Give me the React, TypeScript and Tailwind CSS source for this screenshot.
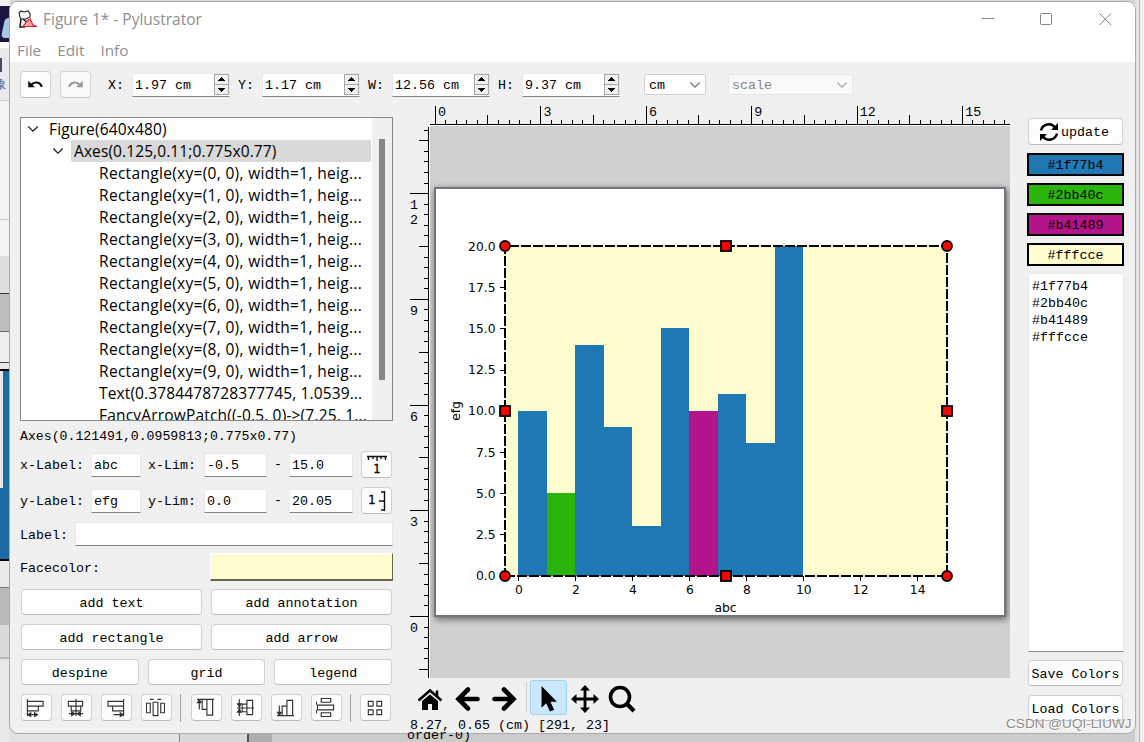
import type { ReactNode } from "react";

/**
 * Main window of the figure editor.
 *
 * Structure:
 * - Title bar and menu
 * - Position / size toolbar
 * - Element tree and property panel
 * - Canvas with rulers and navigation
 * - Color list
 */

const MONO = "font-['Liberation_Mono',monospace] text-[13.33px] leading-4";
const UI = "font-['Open_Sans','Noto_Sans_CJK_SC',sans-serif]";

interface BoxProps {
  className?: string;
  children?: ReactNode;
}

interface Bar {
  x: number;
  w: number;
  y: number;
  fill: string;
}

const positionFields = [
  { label: "X:", value: "1.97 cm" },
  { label: "Y:", value: "1.17 cm" },
  { label: "W:", value: "12.56 cm" },
  { label: "H:", value: "9.37 cm" },
];

const treeChildren = [
  ...[0, 1, 2, 3, 4, 5, 6, 7, 8, 9].map((n) => ({
    label: `Rectangle(xy=(${n}, 0), width=1, heig...`,
    className: "tracking-[0.31px]",
  })),
  { label: "Text(0.3784478728377745, 1.0539...", className: "tracking-[0.13px]" },
  { label: "FancyArrowPatch((-0.5, 0)->(7.25, 1...", className: "tracking-[0.18px]" },
];

const swatches = [
  { color: "#1f77b4", className: "bg-[#1f77b4]" },
  { color: "#2bb40c", className: "bg-[#2bb40c]" },
  { color: "#b41489", className: "bg-[#b41489]" },
  { color: "#fffcce", className: "bg-[#fffcce]" },
];

// Bars in figure pixels
const bars: Bar[] = [
  { x: 84, w: 29, y: 224, fill: "#1f77b4" },
  { x: 113, w: 28, y: 306, fill: "#2bb40c" },
  { x: 141, w: 29, y: 158, fill: "#1f77b4" },
  { x: 170, w: 28, y: 240, fill: "#1f77b4" },
  { x: 198, w: 29, y: 339, fill: "#1f77b4" },
  { x: 227, w: 28, y: 141, fill: "#1f77b4" },
  { x: 255, w: 29, y: 224, fill: "#b41489" },
  { x: 284, w: 28, y: 207, fill: "#1f77b4" },
  { x: 312, w: 29, y: 256, fill: "#1f77b4" },
  { x: 341, w: 28, y: 59, fill: "#1f77b4" },
];

const yTicks = ["20.0", "17.5", "15.0", "12.5", "10.0", "7.5", "5.0", "2.5", "0.0"];
const xTicks = ["0", "2", "4", "6", "8", "10", "12", "14"];

function PushButton({ className = "", children }: BoxProps) {
  return (
    <button
      type="button"
      className={`flex items-center justify-center whitespace-nowrap rounded-[4px] border border-[#d0d0d0] border-b-[#bcbcbc] bg-[#fdfdfd] ${className}`}
    >
      {children}
    </button>
  );
}

function TextButton({ className = "", children }: BoxProps) {
  return <PushButton className={`h-[26px] pt-[4px] ${className}`}>{children}</PushButton>;
}

function Field({ className = "", children }: BoxProps) {
  return (
    <div className={`flex h-6 items-center whitespace-pre border border-[#e9e9e9] border-b-[#868686] bg-white pl-[2px] ${className}`}>
      {children}
    </div>
  );
}

function SpinBox({ value }: { value: string }) {
  return (
    <Field className="w-[98px] justify-between pl-[1px]">
      <span className="pt-[2px]">{value}</span>
      <svg width="15" height="22" viewBox="0 0 15 22" shapeRendering="crispEdges">
        <rect x="0.5" y="0.5" width="14" height="20" fill="#f0f0f0" stroke="#a8a8a8" />
        <path d="M1 10.5h13" stroke="#a8a8a8" />
        <path d="M4 7h7v-1h-1v-1h-1v-1h-1v-1h-1v1h-1v1h-1v1h-1z" fill="#000" />
        <path d="M4 14h7v1h-1v1h-1v1h-1v1h-1v-1h-1v-1h-1v-1h-1z" fill="#000" />
      </svg>
    </Field>
  );
}

function Chevron({ color = "#222" }: { color?: string }) {
  return (
    <svg width="12" height="12" viewBox="0 0 12 12" fill="none" stroke={color} strokeWidth="1.3">
      <path d="M1.3 3.5 6 8.2l4.7-4.7" />
    </svg>
  );
}

function AppIcon() {
  return (
    <svg width="20" height="18" viewBox="0 0 20 18" fill="none">
      <path d="M1 3 3 1l3 1 4-1 2 3v3L8 9H3L2 7z" fill="#fff" stroke="#222" strokeWidth="1.1" />
      <path d="M3 9 2 17h5M5 9l8 7" stroke="#222" strokeWidth="1.6" />
      <path d="M5 16.5 9 11l3-2 3 6 4 1.5z" fill="#f5a6a6" stroke="#d8202a" strokeWidth="1.2" />
    </svg>
  );
}

function UndoIcon({ flip = false }: { flip?: boolean }) {
  return (
    <svg width="17" height="11" viewBox="0 0 18 12" className={flip ? "-scale-x-100" : ""}>
      <path d="M4 6.6C8 2.2 14 3 16 8.6" fill="none" stroke={flip ? "#858585" : "#111"} strokeWidth="2.2" />
      <path d="M1 2v7h7.5z" fill={flip ? "#858585" : "#111"} />
    </svg>
  );
}

function AlignIcon({ children }: BoxProps) {
  return (
    <svg className="mr-[2px]" width="19" height="19" viewBox="0 0 20 20" fill="none" stroke="#333" strokeWidth="1.2">
      {children}
    </svg>
  );
}

function MenuBar() {
  return (
    <div className={`${UI} text-[15.3px] text-[#8f8f8f]`}>
      <div className="flex h-[35px] items-center bg-white pb-[2px] pl-2">
        <AppIcon />
        <span className="ml-[5px] text-[15.5px]">Figure 1* - Pylustrator</span>
        <svg className="ml-auto mr-[23px]" width="130" height="14" viewBox="0 0 130 14" fill="none" stroke="#858585">
          <path d="M0 6.5h12" />
          <rect x="58.5" y="1.5" width="11" height="11" rx="1" />
          <path d="m117.500 1.500 11.500 11.500m0-11.500-11.500 11.500" />
        </svg>
      </div>
      <div className="flex h-[25px] items-center gap-4 bg-white pl-[7px] pt-px">
        <span>File</span>
        <span>Edit</span>
        <span>Info</span>
      </div>
    </div>
  );
}

function PositionToolbar() {
  return (
    <div className="flex h-[43px] items-center pl-[10px] pt-[2px]">
      <PushButton className="h-[27px] w-[31px]"><UndoIcon /></PushButton>
      <PushButton className="ml-[9px] h-[27px] w-[31px] opacity-80"><UndoIcon flip /></PushButton>
      <div className="ml-[17px] flex gap-2">
        {positionFields.map((field) => (
          <div key={field.label} className="flex items-center">
            <span className="w-6 pt-[2px]">{field.label}</span>
            <SpinBox value={field.value} />
          </div>
        ))}
      </div>
      <div className="ml-[24px] flex h-[21px] w-[62px] items-center justify-between rounded-[2px] border border-[#d0d0d0] bg-white px-1">
        <span className="pt-[2px]">cm</span>
        <Chevron color="#777" />
      </div>
      <div className="ml-[22px] flex h-[21px] w-[125px] items-center justify-between rounded-[2px] border border-[#e6e6e6] bg-[#f9f9f9] pl-[3px] pr-1 text-[#858585]">
        <span className="pt-[2px]">scale</span>
        <Chevron color="#aaa" />
      </div>
    </div>
  );
}

function ElementTree() {
  return (
    <div className={`${UI} flex h-[304px] border border-[#828790] bg-white text-[15.5px] leading-[22px]`}>
      <div className="flex-1 overflow-hidden whitespace-nowrap">
        <div className="flex h-[22px] items-center pl-[6px]">
          <Chevron />
          <span className="ml-[10px] tracking-[0.17px]">Figure(640x480)</span>
        </div>
        <div className="flex h-[22px] items-center pl-[31px]">
          <Chevron />
          <span className="ml-[7px] mr-px flex-1 rounded-[2px] bg-[#d9d9d9] pl-[3px] tracking-[0.1px]">Axes(0.125,0.11;0.775x0.77)</span>
        </div>
        {treeChildren.map((item) => (
          <div key={item.label} className={`h-[22px] pl-[78px] ${item.className}`}>{item.label}</div>
        ))}
      </div>
      <div className="w-5 bg-[#f0f0f0] pl-[7px] pt-[21px]">
        <div className="h-[241px] w-[6px] bg-[#868686]" />
      </div>
    </div>
  );
}

function LimitRow({ axis, text, from, to, children }: { axis: string; text: string; from: string; to: string; children: ReactNode }) {
  return (
    <div className="flex h-[27px] items-center">
      <span className="w-[71px] pt-[2px]">{axis}-Label:</span>
      <Field className="w-[50px] pt-[2px]">{text}</Field>
      <span className="ml-[7px] w-14 pt-[2px]">{axis}-Lim:</span>
      <Field className="w-[63px] pt-[2px]">{from}</Field>
      <span className="w-[22px] pl-[7px]">-</span>
      <Field className="w-[64px] pt-[2px]">{to}</Field>
      <PushButton className="ml-2 h-[27px] w-[31px]">{children}</PushButton>
    </div>
  );
}

function AlignButtons() {
  const box = "h-[27px] w-[31px]";
  return (
    <div className="mt-[9px] flex h-[27px] items-center pl-px">
      <div className="flex gap-[9px]">
        <PushButton className={box}>
          <AlignIcon>
            <path d="M1.500 1v18M2 3.500h16v5H2M2 8.500h11v5H2M2 17.500h10" />
            <path d="M2 17.500l3-2v4zM12 17.500l-3-2v4z" fill="#333" />
          </AlignIcon>
        </PushButton>
        <PushButton className={box}>
          <AlignIcon>
            <path d="M10.500 1v18M2.500 3.500h15v5h-15zM5.500 8.500h10v5h-10zM3 16.500h15" />
            <path d="M9 16.500l-3-2v4zM12 16.500l3-2v4z" fill="#333" />
          </AlignIcon>
        </PushButton>
        <PushButton className={box}>
          <AlignIcon>
            <path d="M18.500 1v18M18 3.500H2v5h16M18 8.500H7v5h11M8 17.500h10" />
            <path d="M18 17.500l-3-2v4z" fill="#333" />
          </AlignIcon>
        </PushButton>
        <PushButton className={box}>
          <AlignIcon>
            <path d="M.5 5.500h4v10h-4zM7.500 4.500h5v14h-5zM15.500 5.500h4v10h-4zM4 1.500h4M12 1.500h4" />
          </AlignIcon>
        </PushButton>
      </div>
      <span className="ml-[8px] mr-[10px] h-[28px] w-px bg-[#a0a0a0]" />
      <div className="flex gap-[9px]">
        <PushButton className={box}>
          <AlignIcon>
            <path d="M1 1.500h18M6.500 2v10h5M11.500 2v16h6V2M3.500 2v10" />
            <path d="M3.500 2l-2 3h4z" fill="#333" />
          </AlignIcon>
        </PushButton>
        <PushButton className={box}>
          <AlignIcon>
            <path d="M1 10.500h18M6.500 6.500h5v8h-5zM11.500 2.500h6v15h-6zM3.500 1v18" />
            <path d="M3.500 9l-2-3h4zM3.500 12l-2 3h4z" fill="#333" />
          </AlignIcon>
        </PushButton>
        <PushButton className={box}>
          <AlignIcon>
            <path d="M1 18.500h18M6.500 18V8.500h5M11.500 18V2.500h6V18M3.500 8v10" />
            <path d="M3.500 18l-2-3h4z" fill="#333" />
          </AlignIcon>
        </PushButton>
        <PushButton className={box}>
          <AlignIcon>
            <path d="M5.500.5h10v4h-10zM1.500 7.500h17v5h-17zM5.500 15.500h10v4h-10zM.5 4v3M.5 13v3" />
          </AlignIcon>
        </PushButton>
      </div>
      <span className="ml-[8px] mr-[9px] h-[28px] w-px bg-[#a0a0a0]" />
      <PushButton className={box}>
        <AlignIcon>
          <path d="M3.500 3.500h5v5h-5zM12.500 3.500h5v5h-5zM3.500 12.500h5v5h-5zM12.500 12.500h5v5h-5z" />
        </AlignIcon>
      </PushButton>
    </div>
  );
}

function PropertyPanel() {
  return (
    <div className="ml-[10px] w-[373px] pt-3">
      <ElementTree />
      <div className="flex h-[30px] items-center pt-[2px] text-[13.2px]">Axes(0.121491,0.0959813;0.775x0.77)</div>
      <LimitRow axis="x" text="abc" from="-0.5" to="15.0">
        <svg width="22" height="22" viewBox="0 0 22 22">
          <path d="M1 2.500h20M2.500 2v4M11 2v5M19.500 2v4M7 2v3M15 2v3" stroke="#111" strokeWidth="1.400" />
          <text x="11" y="19" textAnchor="middle" stroke="#000" strokeWidth="0.3" className="font-['DejaVu_Sans'] text-[11.5px]">1</text>
        </svg>
      </LimitRow>
      <div className="h-[9px]" />
      <LimitRow axis="y" text="efg" from="0.0" to="20.05">
        <svg width="22" height="22" viewBox="0 0 22 22">
          <path d="M18.500 1v20M19 2h-4M19 11h-6M19 20h-4" stroke="#111" strokeWidth="1.400" />
          <text x="6" y="14" textAnchor="middle" stroke="#000" strokeWidth="0.3" className="font-['DejaVu_Sans'] text-[11.5px]">1</text>
        </svg>
      </LimitRow>
      <div className="mt-2 flex items-center">
        <span className="w-[55px] pt-[3px]">Label:</span>
        <Field className="flex-1" />
      </div>
      <div className="mt-[7px] flex items-center justify-between">
        <span className="pt-[3px]">Facecolor:</span>
        <div className="h-7 w-[183px] border border-b-2 border-l-white border-r-[#69684f] border-t-white border-b-[#69684f] bg-[#fffcce]" />
      </div>
      <div className="mt-2 grid grid-cols-2 gap-[9px] px-px">
        <TextButton>add text</TextButton>
        <TextButton>add annotation</TextButton>
        <TextButton>add rectangle</TextButton>
        <TextButton>add arrow</TextButton>
      </div>
      <div className="mt-[9px] grid grid-cols-3 gap-[9px] px-px">
        <TextButton>despine</TextButton>
        <TextButton>grid</TextButton>
        <TextButton>legend</TextButton>
      </div>
      <AlignButtons />
    </div>
  );
}

function TopRuler() {
  const ticks = Array.from({ length: 55 }, (_, i) => i);
  return (
    <svg className="ml-[25px]" width="580" height="21" shapeRendering="crispEdges">
      {ticks.map((i) => {
        const h = i % 10 === 0 ? 18 : i % 5 === 0 ? 9 : 4;
        return <rect key={i} x={Math.floor(5.2 + i * 10.545)} y={19 - h} width="1" height={h} />;
      })}
      {[0, 3, 6, 9, 12, 15].map((cm, i) => (
        <text key={cm} x={8 + i * 105.45} y="11">{cm}</text>
      ))}
      <rect y="19" width="580" height="1" />
      <rect y="20" width="580" height="1" fill="#fff" />
    </svg>
  );
}

function SideRuler() {
  const ticks = Array.from({ length: 52 }, (_, i) => i - 5);
  return (
    <svg width="25" height="552" shapeRendering="crispEdges">
      {ticks.map((i) => {
        const w = i % 10 === 0 ? 18 : i % 5 === 0 ? 9 : 4;
        return <rect key={i} x={23 - w} y={Math.round(490 - i * 10.57)} width={w} height="1" />;
      })}
      {["0", "3", "6", "9"].map((cm, i) => (
        <text key={cm} x="5" y={506 - i * 105.7}>{cm}</text>
      ))}
      <text x="5" y="83">1</text>
      <text x="5" y="98">2</text>
      <rect x="23" y="1" width="1" height="551" />
      <rect x="24" width="1" height="552" fill="#fff" />
    </svg>
  );
}

function Chart() {
  return (
    <svg width="568" height="426" viewBox="2 2 568 426" className="font-['DejaVu_Sans',sans-serif] text-[12.3px]">
      <rect x="71" y="59" width="442" height="330" fill="#fffcce" />
      {bars.map((bar) => (
        <rect key={bar.x} x={bar.x} y={bar.y} width={bar.w} height={389 - bar.y} fill={bar.fill} shapeRendering="crispEdges" />
      ))}
      {yTicks.map((label, i) => (
        <g key={label}>
          <path d={`M66 ${Math.round(59 + i * 41.2) + 0.5}h5`} stroke="#000" />
          <text x="61.500" y={63.8 + i * 41.15} textAnchor="end">{label}</text>
        </g>
      ))}
      {xTicks.map((label, i) => (
        <g key={label}>
          <path d={`M${Math.round(84 + i * 57) + 0.5} 389v5`} stroke="#000" />
          <text x={85 + i * 56.95} y="407" textAnchor="middle">{label}</text>
        </g>
      ))}
      <text x="291.500" y="425" textAnchor="middle">abc</text>
      <text transform="translate(26 224) rotate(-90)" textAnchor="middle">efg</text>

      {/* Selection frame */}
      <g stroke="#000" strokeWidth="2" strokeDasharray="10 2">
        <path d="M71 59h442" strokeDashoffset="8" />
        <path d="M71 389h442" />
        <path d="M71 59v330" strokeDashoffset="2" />
        <path d="M513 59v330" strokeDashoffset="5" />
      </g>
      <g fill="#f00" stroke="#000" strokeWidth="1.800">
        {[71, 513].map((x) => [59, 389].map((y) => <circle key={`${x}-${y}`} cx={x} cy={y} r="5" />))}
        <rect x="287" y="54" width="10" height="10" />
        <rect x="287" y="384" width="10" height="10" />
        <rect x="66" y="219" width="10" height="10" />
        <rect x="508" y="219" width="10" height="10" />
      </g>
    </svg>
  );
}

function NavigationBar() {
  return (
    <div className="flex h-[38px] items-center pl-[11px]">
      <svg className="mt-1" width="28" height="28" viewBox="0 0 28 28">
        <path d="M6 16 14 9.500 22 16v9h-6v-6h-4v6H6z" />
        <path d="M2.500 15.500 14 5.500l11.500 10M21 5.500v6" fill="none" stroke="#000" strokeWidth="2.500" />
      </svg>
      <svg className="ml-[10px] mt-[3px]" width="28" height="28" viewBox="0 0 28 28" fill="none" stroke="#000" strokeWidth="4.600" strokeLinecap="round">
        <path d="M23.500 14H7M14 4.500 4.500 14l9.500 9.500" />
      </svg>
      <svg className="ml-[8px] mt-[3px]" width="28" height="28" viewBox="0 0 28 28" fill="none" stroke="#000" strokeWidth="4.600" strokeLinecap="round">
        <path d="M4.500 14H21M14 4.500l9.500 9.500-9.500 9.500" />
      </svg>
      <span className="ml-2 h-[30px] w-px bg-[#cfcfcf]" />
      <div className="ml-[3px] flex h-[35px] w-[37px] items-center justify-center rounded-[3px] border border-[#99d1ff] bg-[#cce8ff]">
        <svg className="mt-[3px]" width="24" height="28" viewBox="0 0 24 30">
          <path d="M4 1v23.500l5-5 4 9 4.500-2-4-8.500h7z" />
        </svg>
      </div>
      <svg className="ml-[4px] mt-[3px]" width="28" height="28" viewBox="0 0 28 28">
        <path d="M14 3v22M3 14h22" stroke="#000" strokeWidth="2.800" />
        <path d="M14 0l5 5.500H9zM14 28l5-5.500H9zM0 14l5.500-5v10zM28 14l-5.500-5v10z" />
      </svg>
      <svg className="ml-[9px] mt-[3px]" width="28" height="28" viewBox="0 0 28 28" fill="none" stroke="#000">
        <circle cx="12" cy="12" r="9.500" strokeWidth="3.600" />
        <path d="m18.500 18.500 7.500 7.500" strokeWidth="4.200" />
      </svg>
    </div>
  );
}

function CanvasArea() {
  return (
    <div className="ml-[12px] flex w-[605px] flex-col">
      <TopRuler />
      <div className="flex">
        <SideRuler />
        <div className="h-[552px] w-[580px] overflow-hidden bg-[#d0d0d0] pl-1 pt-[61px]">
          <div className="h-[430px] w-[572px] border-2 border-[#71757b] bg-white shadow-[1px_2px_7px_rgba(0,0,0,0.55)]">
            <Chart />
          </div>
        </div>
      </div>
      <NavigationBar />
      <div className="whitespace-pre pl-[5px] pt-[2px]">8.27, 0.65 (cm) [291, 23]</div>
    </div>
  );
}

function ColorPanel() {
  return (
    <div className="ml-[17px] flex w-[97px] flex-col pt-[13px]">
      <PushButton className="mx-px h-[27px] pr-[3px]">
        <svg width="20" height="20" viewBox="0 0 20 20" fill="none" stroke="#000" strokeWidth="2.400">
          <path d="M2 8.500C3.500 2 12 0 16 5.500M18 11.500C16.500 18 8 20 4 14.500" />
          <path d="M19 1v7h-7zM1 19v-7h7z" fill="#000" stroke="none" />
        </svg>
        <span className="ml-[2px] pt-[2px]">update</span>
      </PushButton>
      <div className="mt-2 flex flex-col gap-[7px]">
        {swatches.map((swatch) => (
          <div key={swatch.color} className={`flex h-[23px] items-center justify-center border-2 border-black pt-[2px] ${swatch.className}`}>
            {swatch.color}
          </div>
        ))}
      </div>
      <div className="ml-px mt-[7px] h-[379px] border border-[#e9e9e9] border-b-[#868686] bg-white pl-[3px] pt-1 leading-[17px]">
        {swatches.map((swatch) => (
          <div key={swatch.color}>{swatch.color}</div>
        ))}
      </div>
      <TextButton className="mx-px mt-2">Save Colors</TextButton>
      <TextButton className="mx-px mt-[9px]">Load Colors</TextButton>
    </div>
  );
}

// Slices of the other windows that stay visible around the editor
function Backdrop() {
  return (
    <div className="flex h-[742px] justify-between bg-[#d6d6d6]">
      <div className={`${UI} flex w-[10px] flex-col overflow-hidden text-[12px]`}>
        <div className="h-[6px] bg-[#f0f0f0]" />
        <div className="h-[36px] bg-[#1b1740] pl-[3px] pt-3">
          <div className="h-5 w-2 -skew-x-12 rounded-l bg-[#a9c8e4]" />
        </div>
        <div className="h-[6px] bg-white" />
        <div className="h-[53px] overflow-hidden border-b border-[#cccccc] bg-[#e9e9ec] pt-[10px]">
          <div className="h-[14px] w-[2px] bg-[#4a4a58]" />
          <div className="-ml-[6px] mt-[5px] leading-4 text-[#45619a]">象</div>
        </div>
        <div className="h-[119px] border-b border-[#cccccc] bg-[#f3f3f3]" />
        <div className="h-[36px] bg-[#f3f3f3]" />
        <div className="h-[38px] border-b border-[#333333] bg-[#dddddd]" />
        <div className="h-[38px] border-b border-[#666666] bg-[#bdbdbd]" />
        <div className="h-[31px] border-b border-[#444444] bg-[#f0eeee]" />
        <div className="h-[8px] border-b-2 border-dashed border-black bg-[#e8e8e8]" />
        <div className="h-[117px] border-l-[3px] border-[#e8e8e8] bg-[#1d6ba3]" />
        <div className="h-[73px] border-b-2 border-black bg-[#1d6ba3]" />
        <div className="h-[27px] border-b border-[#777777] bg-[#e9e9e9]" />
        <div className="h-[37px] bg-[#b9b9b9]" />
        <div className="h-[34px] border-b-2 border-[#bbbbbb] bg-[#d9d9d9]" />
        <div className="flex-1 bg-[#e7e7e7]" />
      </div>
      <div className="flex flex-1 items-end">
        <div className="h-3 w-[170px] border-r border-[#888888] bg-[#e1e1e1]" />
        <div className="h-3 w-[69px] border-r-2 border-[#555555] bg-[#d8d8d8]" />
        <div className="h-3 w-[23px] bg-[#adadad]" />
        <div className="h-3 flex-1 bg-[#cccccc]" />
      </div>
      <div className="w-[9px] border-l-4 border-[#e3e3e3] bg-[#f0f0f0]">
        <div className="h-full w-px bg-[#b5b5b5]" />
      </div>
    </div>
  );
}

export default function App() {
  return (
    <div className={`${MONO} relative h-[742px] w-[1144px] overflow-hidden text-black`}>
      <Backdrop />
      <div className="absolute left-[9px] top-px h-[733px] w-[1127px] overflow-hidden rounded-[9px] border border-[#ababab] bg-[#f0f0f0]">
        <MenuBar />
        <PositionToolbar />
        <div className="flex">
          <PropertyPanel />
          <CanvasArea />
          <ColorPanel />
        </div>
      </div>
      <div className="absolute left-[407px] top-[732px] h-[10px] w-20 overflow-hidden">
        <div className="-mt-[4px]">order-0)</div>
      </div>
      <div className="absolute left-[1006px] top-[716px] font-['Liberation_Sans',sans-serif] text-[13.6px] text-[#8e8e8e] [text-shadow:1px_1px_0_#fff]">
        CSDN @UQI-LIUWJ
      </div>
    </div>
  );
}
